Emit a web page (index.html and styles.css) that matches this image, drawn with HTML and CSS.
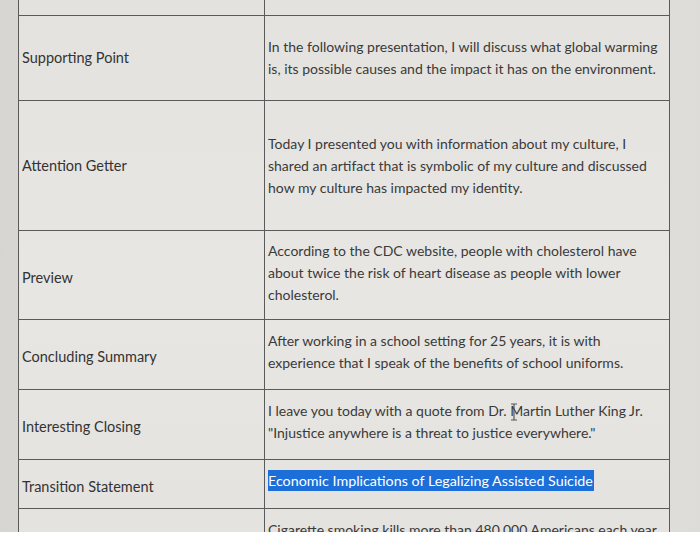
FILE: index.html
```html
<!DOCTYPE html>
<html>
<head>
<meta charset="utf-8">
<link rel="stylesheet" href="styles.css">
</head>
<body>
<div class="photo">
  <table class="outline">
    <colgroup><col class="c-label"><col class="c-text"></colgroup>
    <tr class="r0"><td></td><td></td></tr>
    <tr class="r1">
      <td class="label">Supporting Point</td>
      <td class="text">In the following presentation, I will discuss what global warming is, its possible causes and the impact it has on the environment.</td>
    </tr>
    <tr class="r2">
      <td class="label">Attention Getter</td>
      <td class="text">Today I presented you with information about my culture, I shared an artifact that is symbolic of my culture and discussed how my culture has impacted my identity.</td>
    </tr>
    <tr class="r3 lower">
      <td class="label">Preview</td>
      <td class="text">According to the CDC website, people with cholesterol have about twice the risk of heart disease as people with lower cholesterol.</td>
    </tr>
    <tr class="r4 lower">
      <td class="label">Concluding Summary</td>
      <td class="text">After working in a school setting for 25 years, it is with experience that I speak of the benefits of school uniforms.</td>
    </tr>
    <tr class="r5 lower">
      <td class="label">Interesting Closing</td>
      <td class="text cursor-cell">I leave you today with a quote from Dr. Martin Luther King Jr. "Injustice anywhere is a threat to justice everywhere."<svg class="ibeam" width="8" height="18" viewBox="0 0 8 18"><path d="M1 1h6M4 1v16M1 17h6" stroke="#555" stroke-width="1.2" fill="none"/></svg></td>
    </tr>
    <tr class="r6 lower">
      <td class="label">Transition Statement</td>
      <td class="text"><span class="sel">Economic Implications of Legalizing Assisted Suicide</span></td>
    </tr>
    <tr class="r7">
      <td class="label"></td>
      <td class="text top">Cigarette smoking kills more than 480,000 Americans each year</td>
    </tr>
  </table>
</div>
</body>
</html>
```
FILE: styles.css
```css
html, body {
  margin: 0;
  padding: 0;
  background: #ffffff;
}
.photo {
  height: 532px;
  overflow: hidden;
  background: linear-gradient(90deg, #d6d5d1 0%, #e2e1dd 20%, #e5e4e0 60%, #dddcd8 100%);
  font-family: Lato, "Open Sans", sans-serif;
  font-size: 14px;
  color: #3a3a3a;
}
.outline {
  margin-left: 18px;
  width: 652px;
  border-collapse: collapse;
  table-layout: fixed;
  background: linear-gradient(180deg, #e3e2de 0%, #e7e6e2 50%, #e3e2de 100%);
}
.c-label { width: 246px; }
.outline td {
  border: 1.5px solid #5a5a5a;
  padding: 0 3px;
  vertical-align: middle;
  line-height: 22px;
}
.r0 td { border-top: none; height: 15px; }
.r1 td { height: 84px; }
.r2 td { height: 129px; }
.r3 td { height: 83px; }
.r4 td { height: 64px; }
.r5 td { height: 64px; }
.r6 td { height: 42px; }
.r7 td { height: 60px; border-bottom: none; }
.outline td.top { vertical-align: top; padding-top: 10px; }
.outline td.label {
  font-size: 14.5px;
  color: #333333;
}
.outline .lower td.label { padding-top: 5px; }
.outline .lower td.text { padding-bottom: 5px; }
.outline .r6 td.label { padding-top: 6px; }
.outline .r6 td.text { padding-bottom: 6px; }
.cursor-cell { position: relative; }
.ibeam {
  position: absolute;
  left: 245px;
  top: 13px;
}
.sel {
  background: #1c6fd9;
  color: #ffffff;
  font-size: 14.3px;
  padding: 2px 1px 2px 0;
}
```
